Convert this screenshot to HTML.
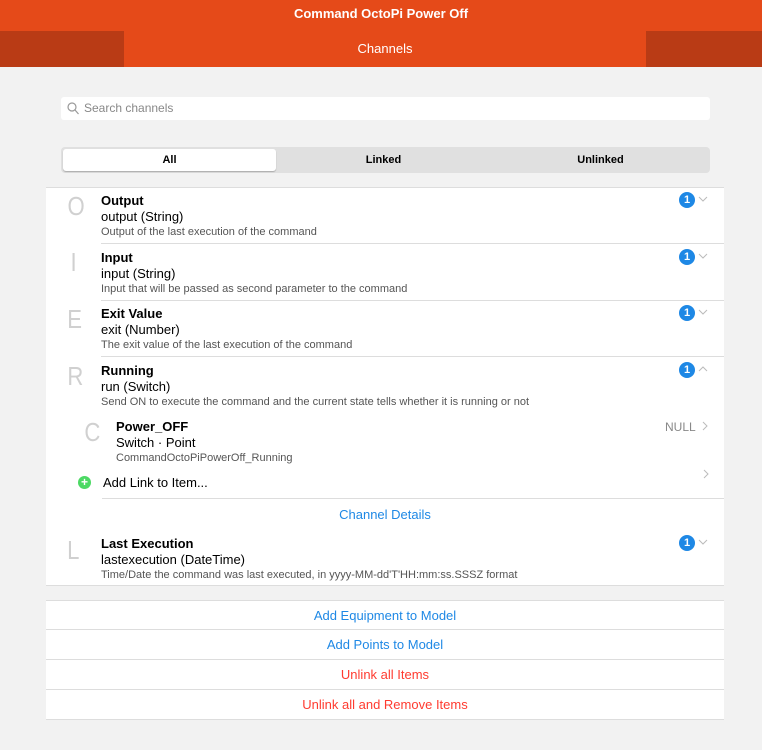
<!DOCTYPE html>
<html><head><meta charset="utf-8"><style>
*{box-sizing:border-box;margin:0;padding:0}
body{width:762px;height:750px;background:#f2f2f2;font-family:"Liberation Sans","DejaVu Sans",sans-serif;position:relative;overflow:hidden;color:#000}
.top{position:absolute;left:0;top:0;width:762px;height:31px;background:#e54a19;color:#fff;font-weight:bold;font-size:13px;text-align:center;line-height:27px}
.tabs{position:absolute;left:0;top:31px;width:762px;height:36px;background:#e54a19}
.tabs .d{position:absolute;top:0;height:36px;background:#b93b15}
.tabs .t{position:absolute;left:124px;width:522px;text-align:center;color:#fff;font-size:13px;line-height:36px}
.search{position:absolute;left:61px;top:97px;width:649px;height:23px;background:#fff;border-radius:3px;font-size:12px;color:#888;line-height:23px;padding-left:23px}
.seg{position:absolute;left:61px;top:147px;width:649px;height:26px;background:#e0e0e0;border-radius:4px;font-size:11px;font-weight:bold}
.seg div{position:absolute;top:2px;height:22px;line-height:22px;text-align:center;width:213px}
.card{position:absolute;left:46px;width:678px;background:#fff}
.row{position:absolute;left:0;width:678px}
.letter{position:absolute;left:20px;font-size:26px;color:#d0d0d0;font-weight:300;transform:scaleX(0.85)}
.ti{position:absolute;left:55px;font-weight:bold;font-size:13px}
.su{position:absolute;left:55px;font-size:13px}
.de{position:absolute;left:55px;font-size:11px;color:#555}
.line{position:absolute;left:55px;right:0;height:1px;background:#ddd}
.badge{position:absolute;left:633px;width:16px;height:16px;border-radius:50%;background:#1e88e5;color:#fff;font-size:11px;font-weight:bold;text-align:center;line-height:16px}
.chev{position:absolute;left:652px}
.btn{position:absolute;left:46px;width:678px;height:30px;background:#fff;border-bottom:1px solid #ddd;text-align:center;line-height:30px;font-size:13px}
</style></head><body>
<div class="top">Command OctoPi Power Off</div>
<div class="tabs"><div class="d" style="left:0;width:124px"></div><div class="d" style="left:646px;width:116px"></div><div class="t">Channels</div></div>
<div class="search"><svg style="position:absolute;left:6px;top:5px" width="12" height="13" viewBox="0 0 12 13"><circle cx="5" cy="5" r="4" fill="none" stroke="#999" stroke-width="1.2"/><path d="M8 8l3.5 4" stroke="#999" stroke-width="1.2"/></svg>Search channels</div>
<div class="seg"><div style="left:2px;background:#fff;border-radius:3px;box-shadow:0 1px 1px #aaa">All</div><div style="left:216px">Linked</div><div style="left:433px">Unlinked</div></div>

<div class="card" style="top:187px;height:398px;border-top:1px solid #ddd">
 <div class="row" style="top:0">
  <div class="letter" style="top:3px">O</div><div class="ti" style="top:5px">Output</div><div class="su" style="top:21px">output (String)</div><div class="de" style="top:38px">Output of the last execution of the command</div>
  <div class="badge" style="top:4px">1</div><svg class="chev" style="top:8px" width="10" height="6"><path d="M1 1l4 4 4-4" fill="none" stroke="#bbb"/></svg><div class="line" style="top:55px"></div></div>
 <div class="row" style="top:56px">
  <div class="letter" style="top:3px;left:24px">I</div><div class="ti" style="top:6px">Input</div><div class="su" style="top:22px">input (String)</div><div class="de" style="top:39px">Input that will be passed as second parameter to the command</div>
  <div class="badge" style="top:5px">1</div><svg class="chev" style="top:9px" width="10" height="6"><path d="M1 1l4 4 4-4" fill="none" stroke="#bbb"/></svg><div class="line" style="top:56px"></div></div>
 <div class="row" style="top:113px">
  <div class="letter" style="top:3px">E</div><div class="ti" style="top:5px">Exit Value</div><div class="su" style="top:21px">exit (Number)</div><div class="de" style="top:38px">The exit value of the last execution of the command</div>
  <div class="badge" style="top:4px">1</div><svg class="chev" style="top:8px" width="10" height="6"><path d="M1 1l4 4 4-4" fill="none" stroke="#bbb"/></svg><div class="line" style="top:55px"></div></div>
 <div class="row" style="top:169px">
  <div class="letter" style="top:4px">R</div><div class="ti" style="top:6px">Running</div><div class="su" style="top:22px">run (Switch)</div><div class="de" style="top:39px">Send ON to execute the command and the current state tells whether it is running or not</div>
  <div class="badge" style="top:5px">1</div><svg class="chev" style="top:9px" width="10" height="6"><path d="M1 5l4-4 4 4" fill="none" stroke="#bbb"/></svg>
  <div class="letter" style="top:60px;left:37px">C</div><div class="ti" style="left:70px;top:62px">Power_OFF</div><div class="su" style="left:70px;top:78px">Switch · Point</div><div class="de" style="left:70px;top:95px">CommandOctoPiPowerOff_Running</div>
  <div style="position:absolute;left:619px;top:63px;font-size:12px;color:#888">NULL</div>
  <svg style="position:absolute;left:656px;top:64px" width="6" height="10"><path d="M1 1l4 4-4 4" fill="none" stroke="#bbb"/></svg>
  <div style="position:absolute;left:32px;top:119px;width:13px;height:13px;border-radius:50%;background:#4cd964;color:#fff;font-size:12px;line-height:13px;text-align:center;font-weight:bold">+</div>
  <div class="su" style="left:57px;top:118px">Add Link to Item...</div>
  <svg style="position:absolute;left:657px;top:112px" width="6" height="10"><path d="M1 1l4 4-4 4" fill="none" stroke="#bbb"/></svg>
  <div class="line" style="top:141px;left:56px"></div></div>
 <div class="row" style="top:311px;height:32px;text-align:center;line-height:32px;font-size:13px;color:#1e88e5">Channel Details</div>
 <div class="row" style="top:343px">
  <div class="letter" style="top:4px">L</div><div class="ti" style="top:5px">Last Execution</div><div class="su" style="top:21px">lastexecution (DateTime)</div><div class="de" style="top:38px">Time/Date the command was last executed, in yyyy-MM-dd'T'HH:mm:ss.SSSZ format</div>
  <div class="badge" style="top:4px">1</div><svg class="chev" style="top:8px" width="10" height="6"><path d="M1 1l4 4 4-4" fill="none" stroke="#bbb"/></svg></div>
</div>
<div style="position:absolute;left:46px;top:585px;width:678px;height:1px;background:#ddd"></div>
<div class="btn" style="top:600px;border-top:1px solid #ddd;color:#1e88e5">Add Equipment to Model</div>
<div class="btn" style="top:630px;color:#1e88e5">Add Points to Model</div>
<div class="btn" style="top:660px;color:#ff3b30">Unlink all Items</div>
<div class="btn" style="top:690px;color:#ff3b30">Unlink all and Remove Items</div>
</body></html>
